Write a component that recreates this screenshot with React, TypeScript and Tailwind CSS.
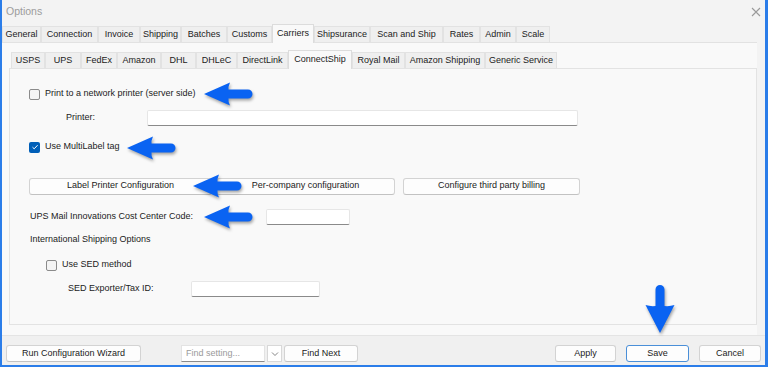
import React from "react";

const row1 = [
  { label: "General", w: "w-[39px]" },
  { label: "Connection", w: "w-[57px]" },
  { label: "Invoice", w: "w-[42px]" },
  { label: "Shipping", w: "w-[41px]" },
  { label: "Batches", w: "w-[46px]" },
  { label: "Customs", w: "w-[45px]" },
  { label: "Carriers", w: "w-[42px]", active: true },
  { label: "Shipsurance", w: "w-[56px]" },
  { label: "Scan and Ship", w: "w-[73px]" },
  { label: "Rates", w: "w-[37px]" },
  { label: "Admin", w: "w-[36px]" },
  { label: "Scale", w: "w-[34px]" },
];

const row2 = [
  { label: "USPS", w: "w-[34px]" },
  { label: "UPS", w: "w-[36px]" },
  { label: "FedEx", w: "w-[36px]" },
  { label: "Amazon", w: "w-[44px]" },
  { label: "DHL", w: "w-[35px]" },
  { label: "DHLeC", w: "w-[41px]" },
  { label: "DirectLink", w: "w-[51px]" },
  { label: "ConnectShip", w: "w-[64px]", active: true },
  { label: "Royal Mail", w: "w-[53px]" },
  { label: "Amazon Shipping", w: "w-[80px]" },
  { label: "Generic Service", w: "w-[72px]" },
];

function Tab({ label, w, active }: { label: string; w: string; active?: boolean }) {
  return (
    <div
      className={`${w} flex items-center justify-center border border-b-0 whitespace-nowrap ${
        active
          ? "h-[19px] -mb-px relative z-10 bg-[#f9f9f9] border-[#dcdcdc]"
          : "h-[16px] bg-[#efefef] border-[#e2e2e2]"
      }`}
    >
      {label}
    </div>
  );
}

function Checkbox({ checked }: { checked?: boolean }) {
  return checked ? (
    <span className="w-[11px] h-[11px] rounded-[2px] bg-[#005fb8] flex items-center justify-center shrink-0">
      <svg width="8" height="8" viewBox="0 0 8 8">
        <polyline points="1.5,4.2 3.2,5.8 6.6,2.2" fill="none" stroke="#fff" strokeWidth="1" />
      </svg>
    </span>
  ) : (
    <span className="w-[11px] h-[11px] rounded-[2px] border border-[#8b8b8b] bg-[#f4f4f4] shrink-0" />
  );
}

function Input({ w }: { w: string }) {
  return <div className={`${w} h-[16px] bg-white border border-[#e6e6e6] border-b-[#8a8a8a] rounded-[2px]`} />;
}

function Button({ w, children, primary }: { w: string; children: React.ReactNode; primary?: boolean }) {
  return (
    <div
      className={`${w} h-[17px] flex items-center justify-center rounded-[3px] bg-[#fdfdfd] border whitespace-nowrap ${
        primary ? "border-[#4a8fd8]" : "border-[#d3d3d3] border-b-[#c2c2c2]"
      }`}
    >
      {children}
    </div>
  );
}

function LeftArrow({ pos }: { pos: string }) {
  return (
    <svg
      className={`absolute ${pos} drop-shadow-[1px_2px_1.5px_rgba(0,0,0,0.35)]`}
      width="52"
      height="26"
      viewBox="0 0 52 26"
    >
      <path
        d="M1 13 L27 1.5 Q25 6 25.5 8.5 L45 8.5 A4.5 4.5 0 0 1 45 17.5 L25.5 17.5 Q25 20 27 24.5 Z"
        fill="#0a63f2"
      />
    </svg>
  );
}

function DownArrow() {
  return (
    <svg
      className="absolute left-[642px] top-[284px] drop-shadow-[1px_2px_1.5px_rgba(0,0,0,0.35)]"
      width="32"
      height="52"
      viewBox="0 0 32 52"
    >
      <path
        d="M16 49 L1.5 21 Q6 22.5 11.5 22 L11.5 5.5 A4.5 4.5 0 0 1 20.5 5.5 L20.5 22 Q26 22.5 30.5 21 Z"
        fill="#0a63f2"
      />
    </svg>
  );
}

export default function App() {
  return (
    <div className="relative w-[768px] h-[367px] overflow-hidden bg-[#f3f3f3] border-l-2 border-r-[3px] border-b-2 border-[#2b7de9] flex flex-col font-['Liberation_Sans',Arial,sans-serif] text-[9px] text-[#1b1b1b]">
      {/* title */}
      <div className="h-[24px] shrink-0 flex items-center justify-between pl-[4px] pr-[4px]">
        <span className="text-[10.5px] text-[#9c9c9c]">Options</span>
        <svg width="10" height="10" viewBox="0 0 10 10">
          <path d="M1 1 L9 9 M9 1 L1 9" stroke="#9a9a9a" strokeWidth="1.1" />
        </svg>
      </div>

      {/* top tabs */}
      <div className="h-[18px] shrink-0 flex items-end">
        {row1.map((t) => (
          <Tab key={t.label} {...t} />
        ))}
      </div>

      {/* page */}
      <div className="h-[293px] shrink-0 mr-[8px] bg-[#f9f9f9] border-t border-[#e2e2e2] flex flex-col pt-[7px] pb-[10px]">
        <div className="h-[18px] shrink-0 ml-[9px] flex items-end">
          {row2.map((t) => (
            <Tab key={t.label} {...t} />
          ))}
        </div>

        <div className="flex-1 ml-[7px] border border-[#e3e3e3] bg-[#f9f9f9] flex flex-col pl-[19px] pt-[16px]">
          <div className="h-[18px] flex items-center gap-[5px]">
            <Checkbox />
            <span>Print to a network printer (server side)</span>
          </div>
          <div className="h-[16px] mt-[7px] flex items-center">
            <span className="ml-[37px] w-[81px]">Printer:</span>
            <Input w="w-[431px]" />
          </div>
          <div className="h-[18px] mt-[12px] flex items-center gap-[5px]">
            <Checkbox checked />
            <span>Use MultiLabel tag</span>
          </div>
          <div className="h-[18px] mt-[21px] flex items-center">
            <Button w="w-[183px]">Label Printer Configuration</Button>
            <div className="ml-[4px]">
              <Button w="w-[179px]">Per-company configuration</Button>
            </div>
            <div className="ml-[8px]">
              <Button w="w-[177px]">Configure third party billing</Button>
            </div>
          </div>
          <div className="h-[16px] mt-[14px] flex items-center">
            <span className="w-[237px] pl-[1px]">UPS Mail Innovations Cost Center Code:</span>
            <Input w="w-[84px]" />
          </div>
          <div className="h-[16px] mt-[7px] flex items-center pl-[1px]">International Shipping Options</div>
          <div className="h-[18px] mt-[8px] flex items-center gap-[5px] pl-[17px]">
            <Checkbox />
            <span>Use SED method</span>
          </div>
          <div className="h-[16px] mt-[7px] flex items-center">
            <span className="ml-[39px] w-[123px]">SED Exporter/Tax ID:</span>
            <Input w="w-[129px]" />
          </div>
        </div>
      </div>

      {/* footer */}
      <div className="flex-1 bg-[#f0f0f0] border-t border-[#e4e4e4] flex items-start pt-[9px] pl-[4px] pr-[4px]">
        <Button w="w-[135px]">Run Configuration Wizard</Button>
        <div className="ml-[40px] w-[84px] h-[17px] bg-white border border-[#e3e3e3] border-b-[#8a8a8a] flex items-center pl-[4px] text-[#9a9a9a]">
          Find setting...
        </div>
        <div className="ml-[2px] w-[15px] h-[17px] bg-white border border-[#d8d8d8] flex items-center justify-center">
          <svg width="8" height="6" viewBox="0 0 8 6">
            <polyline points="1,1.5 4,4.5 7,1.5" fill="none" stroke="#777" strokeWidth="0.9" />
          </svg>
        </div>
        <div className="ml-[2px]">
          <Button w="w-[74px]">Find Next</Button>
        </div>
        <div className="ml-auto flex gap-[10px]">
          <Button w="w-[61px]">Apply</Button>
          <Button w="w-[63px]" primary>
            Save
          </Button>
          <Button w="w-[62px]">Cancel</Button>
        </div>
      </div>

      <LeftArrow pos="left-[201px] top-[81px]" />
      <LeftArrow pos="left-[124px] top-[135px]" />
      <LeftArrow pos="left-[190px] top-[173px]" />
      <LeftArrow pos="left-[201px] top-[204px]" />
      <DownArrow />
    </div>
  );
}
